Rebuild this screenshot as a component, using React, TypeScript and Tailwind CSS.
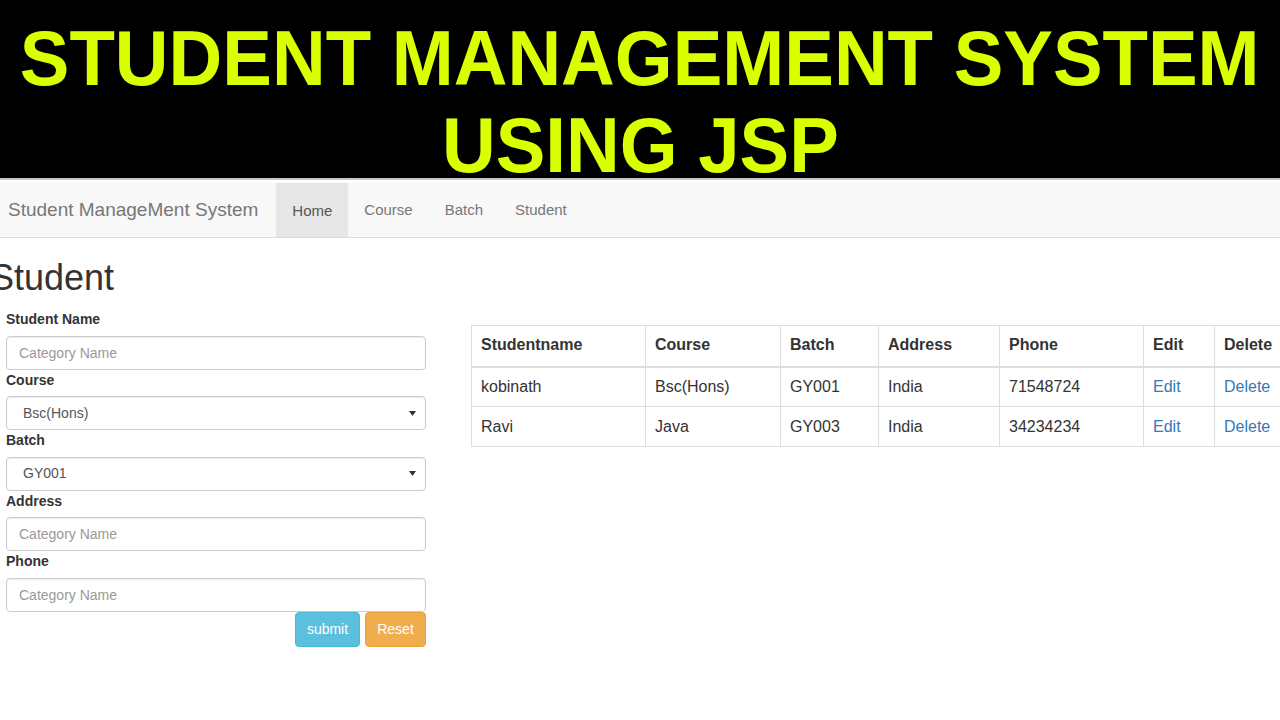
import { ChangeEvent } from "react";

const font = { fontFamily: '"Liberation Sans", Arial, sans-serif' };

const students = [
  { name: "kobinath", course: "Bsc(Hons)", batch: "GY001", address: "India", phone: "71548724" },
  { name: "Ravi", course: "Java", batch: "GY003", address: "India", phone: "34234234" },
];

const App = () => {
  return (
    <div className="w-[1280px] h-[720px] overflow-hidden bg-white text-[#333]" style={font}>
      {/* Banner */}
      <div className="h-[178px] bg-black flex flex-col items-center pt-[15px]">
        <div className="text-[77px] leading-[87px] font-bold text-[#d9ff00] whitespace-nowrap scale-x-[0.966]">
          STUDENT MANAGEMENT SYSTEM
        </div>
        <div className="text-[77px] leading-[87px] font-bold text-[#d9ff00] whitespace-nowrap scale-x-[0.966]">
          USING JSP
        </div>
      </div>

      {/* Navbar */}
      <div className="border-t-2 border-[#c8c8c8] pt-[2px] bg-white">
        <nav className="h-[56px] bg-[#f8f8f8] border-b border-[#dcdcdc] flex items-stretch">
          <div className="flex items-center pl-2 pr-[18px] pt-[2px] text-[19px] text-[#777]">Student ManageMent System</div>
          <ul className="flex items-stretch text-[15px] text-[#777]">
            <li className="flex items-center px-4 pt-[2px] mt-[1px] bg-[#e7e7e7] text-[#555]">Home</li>
            <li className="flex items-center px-4 pt-[2px]">Course</li>
            <li className="flex items-center px-4 pt-[2px]">Batch</li>
            <li className="flex items-center px-4 pt-[2px]">Student</li>
          </ul>
        </nav>
      </div>

      {/* Content */}
      <div className="flex items-start">
        <div className="w-[426px] pl-[6px] shrink-0">
          <h1 className="text-[36px] leading-[40px] mt-[20px] mb-[11px] -ml-[16px] text-[#333]">Student</h1>
          <Field label="Student Name"><TextInput /></Field>
          <Field label="Course"><SelectBox value="Bsc(Hons)" /></Field>
          <Field label="Batch"><SelectBox value="GY001" /></Field>
          <Field label="Address"><TextInput /></Field>
          <Field label="Phone"><TextInput /></Field>
          <div className="flex justify-end gap-[5px]">
            <button className="w-[65px] h-[35px] rounded bg-[#5bc0de] border border-[#46b8da] text-white text-[14px]">submit</button>
            <button className="w-[61px] h-[35px] rounded bg-[#f0ad4e] border border-[#eea236] text-white text-[14px]">Reset</button>
          </div>
        </div>

        <div className="ml-[45px] mt-[87px] shrink-0">
          <table className="border-collapse text-[16px] table-fixed">
            <thead>
              <tr className="h-[41px]">
                {[
                  ["Studentname", "w-[174px]"],
                  ["Course", "w-[135px]"],
                  ["Batch", "w-[98px]"],
                  ["Address", "w-[121px]"],
                  ["Phone", "w-[144px]"],
                  ["Edit", "w-[71px]"],
                  ["Delete", "w-[68px]"],
                ].map(([h, w]) => (
                  <th key={h} className={`${w} border border-[#ddd] border-b-2 text-left font-bold pl-[9px] pr-2 pb-[2px]`}>
                    {h}
                  </th>
                ))}
              </tr>
            </thead>
            <tbody>
              {students.map((s) => (
                <tr key={s.name} className="h-[40px]">
                  <td className="border border-[#ddd] pl-[9px]">{s.name}</td>
                  <td className="border border-[#ddd] pl-[9px]">{s.course}</td>
                  <td className="border border-[#ddd] pl-[9px]">{s.batch}</td>
                  <td className="border border-[#ddd] pl-[9px]">{s.address}</td>
                  <td className="border border-[#ddd] pl-[9px]">{s.phone}</td>
                  <td className="border border-[#ddd] pl-[9px] text-[#337ab7]">Edit</td>
                  <td className="border border-[#ddd] pl-[9px] text-[#337ab7]">Delete</td>
                </tr>
              ))}
            </tbody>
          </table>
        </div>
      </div>
    </div>
  );
};

export default App;

// -- Sub-components --

const Field = ({ label, children }: { label: string; children: React.ReactNode }) => (
  <div>
    <label className="block text-[14px] leading-[20px] font-bold mb-[6.5px]">{label}</label>
    {children}
  </div>
);

const TextInput = () => (
  <input
    placeholder="Category Name"
    onChange={(_e: ChangeEvent<HTMLInputElement>) => {}}
    className="block w-[420px] h-[34px] px-3 text-[14px] text-[#555] border border-[#ccc] rounded shadow-[inset_0_1px_1px_rgba(0,0,0,0.075)] placeholder:text-[#999] outline-none"
  />
);

const SelectBox = ({ value }: { value: string }) => (
  <div className="flex items-center justify-between w-[420px] h-[34px] pl-4 pr-[9px] text-[14px] text-[#555] border border-[#ccc] rounded shadow-[inset_0_1px_1px_rgba(0,0,0,0.075)]">
    <span>{value}</span>
    <svg width="7" height="5" viewBox="0 0 7 5">
      <path d="M0 0 H7 L3.5 5 Z" fill="#333" />
    </svg>
  </div>
);
